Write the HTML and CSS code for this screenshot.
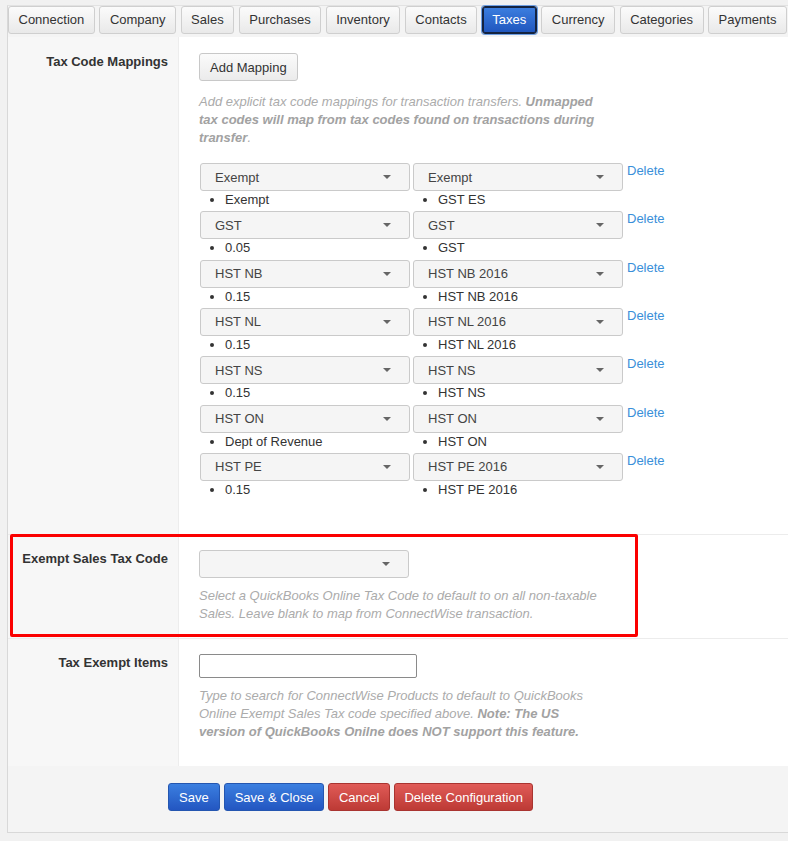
FILE: index.html
```html
<!DOCTYPE html>
<html>
<head>
<meta charset="utf-8">
<link rel="stylesheet" href="styles.css">
</head>
<body>
<div class="page">
  <div class="panel">
    <nav class="tabs">
      <span class="tab">Connection</span>
      <span class="tab">Company</span>
      <span class="tab">Sales</span>
      <span class="tab">Purchases</span>
      <span class="tab">Inventory</span>
      <span class="tab">Contacts</span>
      <span class="tab active">Taxes</span>
      <span class="tab">Currency</span>
      <span class="tab">Categories</span>
      <span class="tab">Payments</span>
    </nav>
    <div class="form">
      <div class="row row-mappings">
        <div class="label">Tax Code Mappings</div>
        <div class="field">
          <button class="btn">Add Mapping</button>
          <p class="help help-first">Add explicit tax code mappings for transaction transfers. <b>Unmapped tax codes will map from tax codes found on transactions during transfer</b>.</p>
          <div class="mappings">
            <div class="map-row">
              <div class="cell"><div class="select"><span>Exempt</span><i class="caret"></i></div><ul><li>Exempt</li></ul></div>
              <div class="cell"><div class="select"><span>Exempt</span><i class="caret"></i></div><ul><li>GST ES</li></ul></div>
              <a class="delete">Delete</a>
            </div>
            <div class="map-row">
              <div class="cell"><div class="select"><span>GST</span><i class="caret"></i></div><ul><li>0.05</li></ul></div>
              <div class="cell"><div class="select"><span>GST</span><i class="caret"></i></div><ul><li>GST</li></ul></div>
              <a class="delete">Delete</a>
            </div>
            <div class="map-row">
              <div class="cell"><div class="select"><span>HST NB</span><i class="caret"></i></div><ul><li>0.15</li></ul></div>
              <div class="cell"><div class="select"><span>HST NB 2016</span><i class="caret"></i></div><ul><li>HST NB 2016</li></ul></div>
              <a class="delete">Delete</a>
            </div>
            <div class="map-row">
              <div class="cell"><div class="select"><span>HST NL</span><i class="caret"></i></div><ul><li>0.15</li></ul></div>
              <div class="cell"><div class="select"><span>HST NL 2016</span><i class="caret"></i></div><ul><li>HST NL 2016</li></ul></div>
              <a class="delete">Delete</a>
            </div>
            <div class="map-row">
              <div class="cell"><div class="select"><span>HST NS</span><i class="caret"></i></div><ul><li>0.15</li></ul></div>
              <div class="cell"><div class="select"><span>HST NS</span><i class="caret"></i></div><ul><li>HST NS</li></ul></div>
              <a class="delete">Delete</a>
            </div>
            <div class="map-row">
              <div class="cell"><div class="select"><span>HST ON</span><i class="caret"></i></div><ul><li>Dept of Revenue</li></ul></div>
              <div class="cell"><div class="select"><span>HST ON</span><i class="caret"></i></div><ul><li>HST ON</li></ul></div>
              <a class="delete">Delete</a>
            </div>
            <div class="map-row">
              <div class="cell"><div class="select"><span>HST PE</span><i class="caret"></i></div><ul><li>0.15</li></ul></div>
              <div class="cell"><div class="select"><span>HST PE 2016</span><i class="caret"></i></div><ul><li>HST PE 2016</li></ul></div>
              <a class="delete">Delete</a>
            </div>
          </div>
        </div>
      </div>
      <div class="row row-exempt">
        <div class="label">Exempt Sales Tax Code</div>
        <div class="field">
          <div class="select select-single"><span></span><i class="caret"></i></div>
          <p class="help">Select a QuickBooks Online Tax Code to default to on all non-taxable Sales. Leave blank to map from ConnectWise transaction.</p>
        </div>
        <div class="highlight"></div>
      </div>
      <div class="row row-items">
        <div class="label">Tax Exempt Items</div>
        <div class="field">
          <div class="text-input"></div>
          <p class="help">Type to search for ConnectWise Products to default to QuickBooks Online Exempt Sales Tax code specified above. <b>Note: The US version of QuickBooks Onilne does NOT support this feature.</b></p>
        </div>
      </div>
    </div>
    <div class="actions">
      <button class="btn btn-blue">Save</button>
      <button class="btn btn-blue">Save &amp; Close</button>
      <button class="btn btn-red">Cancel</button>
      <button class="btn btn-red">Delete Configuration</button>
    </div>
  </div>
</div>
</body>
</html>
```
FILE: styles.css
```css
html, body {
  margin: 0;
  padding: 0;
  width: 788px;
  height: 841px;
  overflow: hidden;
  background: #f1f1f1;
  font-family: "Liberation Sans", Arial, sans-serif;
  font-size: 13px;
  color: #333;
}

.page {
  padding: 5px 0 0 7px;
}

.panel {
  width: 900px;
  background: #f4f4f4;
  border-top: 1px solid #e2e2e2;
  border-left: 1px solid #d8d8d8;
  border-bottom: 1px solid #d8d8d8;
}

.tabs {
  display: flex;
  gap: 4.6px;
  white-space: nowrap;
}

.tab {
  box-sizing: border-box;
  height: 28px;
  line-height: 26px;
  padding: 0 9.5px;
  border: 1px solid #cfcfcf;
  border-radius: 3px;
  background: linear-gradient(#fbfbfb, #e9e9e9);
  color: #333;
  font-size: 13px;
}

.tab.active {
  border: 1px solid #14233f;
  color: #fff;
  background: linear-gradient(#3c7fe0, #1f55bd);
  box-shadow: inset 0 0 0 1px #14233f, 0 0 0 1px #6f9fe2;
}

.form {
  margin-top: 3px;
}

.row {
  position: relative;
  display: grid;
  grid-template-columns: 171px 1fr;
  border-bottom: 1px solid #ececec;
}

.row:last-child {
  border-bottom: none;
}

.label {
  background: #f7f7f7;
  border-right: 1px solid #ededed;
  text-align: right;
  font-weight: bold;
  padding: 17px 10px 0 0;
  line-height: 16px;
}

.field {
  background: #fff;
  padding: 16px 0 0 20px;
}

.row-mappings .field {
  padding-bottom: 33px;
}

.row-exempt .label {
  padding-top: 16px;
}

.row-exempt .field {
  padding-top: 15px;
  padding-bottom: 15px;
}

.row-items .label {
  padding-top: 16px;
}

.row-items .field {
  padding-top: 15px;
  padding-bottom: 25px;
}

.btn {
  box-sizing: border-box;
  height: 28px;
  padding: 0 10px;
  border: 1px solid #c8c8c8;
  border-radius: 3px;
  background: linear-gradient(#fbfbfb, #ebebeb);
  font-family: "Liberation Sans", Arial, sans-serif;
  font-size: 13px;
  color: #333;
}

.help {
  width: 400px;
  margin: 9px 0 0 0;
  font-style: italic;
  line-height: 18px;
  color: #ababab;
}

.help b {
  color: #a2a2a2;
}

.help-first {
  margin-top: 12px;
}

.mappings {
  margin-top: 16px;
  padding-left: 1px;
}

.map-row {
  display: flex;
  gap: 3px;
  align-items: flex-start;
  margin-bottom: 2.33px;
}

.cell {
  width: 210px;
}

.select {
  box-sizing: border-box;
  display: flex;
  align-items: center;
  justify-content: space-between;
  width: 210px;
  height: 28px;
  padding: 0 18px 0 14px;
  border: 1px solid #cacaca;
  border-radius: 3px;
  background: #f5f5f5;
  color: #444;
}

.select-single {
  width: 210px;
  margin-left: 0;
}

.caret {
  width: 0;
  height: 0;
  border-left: 4px solid transparent;
  border-right: 4px solid transparent;
  border-top: 4px solid #666;
}

ul {
  margin: 0;
  padding-left: 25px;
  line-height: 18px;
  color: #333;
}

.delete {
  margin-left: 1px;
  line-height: 16px;
  color: #3a8fd9;
}

.text-input {
  box-sizing: border-box;
  width: 218px;
  height: 24px;
  border: 1px solid #8a8a8a;
  border-radius: 2px;
  background: #fff;
}

.highlight {
  position: absolute;
  left: 2px;
  top: -1px;
  width: 628px;
  height: 103px;
  box-sizing: border-box;
  border: 3px solid #fb0000;
  border-radius: 2px;
  pointer-events: none;
}

.actions {
  display: flex;
  gap: 4px;
  padding: 17px 0 21px 160px;
}

.btn-blue {
  color: #fff;
  border-color: #2456b0;
  background: linear-gradient(#3b7fe0, #2356c1);
}

.btn-red {
  color: #fff;
  padding: 0 9.5px;
  border-color: #a93430;
  background: linear-gradient(#e05b57, #bd3a35);
}
```
